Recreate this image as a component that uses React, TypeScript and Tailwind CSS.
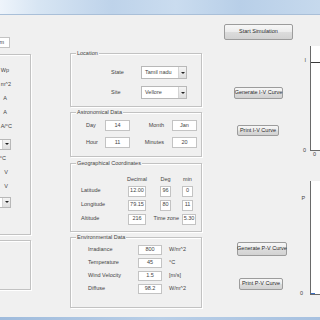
import React from "react";

const arrow = (
  <span className="flex h-full w-[8px] items-center justify-center border-l border-[#d4d4d4] bg-[linear-gradient(#f4f4f4,#dedede)]">
    <span className="h-0 w-0 border-x-[2px] border-t-[2px] border-x-transparent border-t-[#222]" />
  </span>
);

function Field({ v, className }: { v: string; className: string }) {
  return (
    <div className={"flex shrink-0 items-center justify-center border border-[#c3c3c3] bg-white " + className}>
      {v}
    </div>
  );
}

function Button({ label, className }: { label: string; className: string }) {
  return (
    <div
      className={
        "flex shrink-0 items-center justify-center self-start whitespace-nowrap rounded-[2px] border border-[#9c9c9c] bg-[linear-gradient(#f7f7f7,#ececec_48%,#dcdcdc_52%,#d2d2d2)] text-[#2a2a2a] " +
        className
      }
    >
      {label}
    </div>
  );
}

function Panel({ title, className, children }: { title?: string; className: string; children?: React.ReactNode }) {
  return (
    <div className={"relative shrink-0 border border-[#c2c2c2] shadow-[1px_1px_0_#ffffff,inset_1px_1px_0_#ffffff] " + className}>
      {title && (
        <span className="absolute -top-[4px] left-[5px] whitespace-nowrap bg-[#f0f0f0] px-[1px] leading-[7px]">{title}</span>
      )}
      {children}
    </div>
  );
}

function LeftColumn() {
  return (
    <div className="flex w-[31px] shrink-0 flex-col">
      <div className="mt-[22px] flex h-[11px] w-[14px] -ml-[4px] items-center justify-end border border-[#c3c3c3] bg-white pr-[5px]">m</div>
      <Panel className="mt-[6px] -ml-[2px] h-[181px] w-[33px]">
        <div className="flex flex-col pt-[9px]">
          <div className="flex h-[14px] w-[10px] items-center justify-end">Wp</div>
          <div className="flex h-[14px] w-[12px] items-center justify-end whitespace-nowrap">m^2</div>
          <div className="flex h-[14px] w-[8px] items-center justify-end">A</div>
          <div className="flex h-[14px] w-[8px] items-center justify-end">A</div>
          <div className="flex h-[14px] w-[13px] items-center justify-end whitespace-nowrap">A/°C</div>
          <div className="mt-[3px] flex h-[14px] w-[12px] items-center justify-end">
            <div className="flex h-[11px] w-[20px] shrink-0 items-center justify-end border border-[#b8b8b8] bg-white">{arrow}</div>
          </div>
          <div className="mt-[1px] flex h-[14px] w-[7px] items-center justify-end">°C</div>
          <div className="flex h-[14px] w-[9px] items-center justify-end">V</div>
          <div className="flex h-[14px] w-[9px] items-center justify-end">V</div>
          <div className="mt-[1px] flex h-[14px] w-[12px] items-center justify-end">
            <div className="flex h-[11px] w-[20px] shrink-0 items-center justify-end border border-[#b8b8b8] bg-white">{arrow}</div>
          </div>
        </div>
      </Panel>
      <Panel className="mt-[5px] -ml-[2px] h-[50px] w-[33px]" />
    </div>
  );
}

function Select({ value }: { value: string }) {
  return (
    <div className="flex h-[13px] w-[46px] items-center border border-[#b8b8b8] bg-white">
      <span className="flex-1 whitespace-nowrap pl-[3px]">{value}</span>
      {arrow}
    </div>
  );
}

function MiddleColumn() {
  return (
    <div className="ml-[39px] flex w-[132px] shrink-0 flex-col pt-[38px]">
      <Panel title="Location" className="h-[54px]">
        <div className="flex flex-col gap-[7px] pt-[12px]">
          <div className="flex h-[13px] items-center">
            <span className="ml-[40px] w-[30px]">State</span>
            <Select value="Tamil nadu" />
          </div>
          <div className="flex h-[13px] items-center">
            <span className="ml-[40px] w-[30px]">Site</span>
            <Select value="Vellore" />
          </div>
        </div>
      </Panel>

      <Panel title="Astronomical Data" className="mt-[5px] h-[45px]">
        <div className="flex flex-col gap-[6px] pt-[7px]">
          <div className="flex h-[11px] items-center">
            <span className="ml-[15px] w-[19px]">Day</span>
            <Field v="14" className="h-[11px] w-[25px]" />
            <span className="w-[42px] pr-[8px] text-right">Month</span>
            <Field v="Jan" className="h-[11px] w-[25px]" />
          </div>
          <div className="flex h-[11px] items-center">
            <span className="ml-[15px] w-[19px]">Hour</span>
            <Field v="11" className="h-[11px] w-[25px]" />
            <span className="w-[42px] pr-[8px] text-right">Minutes</span>
            <Field v="20" className="h-[11px] w-[25px]" />
          </div>
        </div>
      </Panel>

      <Panel title="Geographical Coordinates" className="mt-[6px] h-[69px]">
        <div className="flex flex-col pt-[12px]">
          <div className="flex h-[8px] items-center">
            <span className="ml-[10px] w-[47px]" />
            <span className="flex w-[18px] justify-center whitespace-nowrap">Decimal</span>
            <span className="w-[14px]" />
            <span className="flex w-[11px] justify-center">Deg</span>
            <span className="w-[11px]" />
            <span className="flex w-[11px] justify-center">min</span>
          </div>
          {[
            ["Latitude", "12.00", "96", "0"],
            ["Longitude", "79.15", "80", "11"],
          ].map(r => (
            <div key={r[0]} className="flex h-[14px] items-center">
              <span className="ml-[10px] w-[47px]">{r[0]}</span>
              <Field v={r[1]} className="h-[11px] w-[18px]" />
              <span className="w-[14px]" />
              <Field v={r[2]} className="h-[11px] w-[11px]" />
              <span className="w-[11px]" />
              <Field v={r[3]} className="h-[11px] w-[11px]" />
            </div>
          ))}
          <div className="flex h-[14px] items-center">
            <span className="ml-[10px] w-[47px]">Altitude</span>
            <Field v="216" className="h-[11px] w-[18px]" />
            <span className="w-[36px] whitespace-nowrap pr-[3px] text-right">Time zone</span>
            <Field v="5.30" className="h-[11px] w-[14px]" />
          </div>
        </div>
      </Panel>

      <Panel title="Environmental Data" className="mt-[5px] h-[71px]">
        <div className="flex flex-col pt-[5px]">
          {[
            ["Irradiance", "800", "W/m^2"],
            ["Temperature", "45", "°C"],
            ["Wind Velocity", "1.5", "[m/s]"],
            ["Diffuse", "98.2", "W/m^2"],
          ].map(r => (
            <div key={r[0]} className="flex h-[13px] items-center">
              <span className="ml-[17px] w-[50px]">{r[0]}</span>
              <Field v={r[1]} className="h-[10px] w-[24px]" />
              <span className="ml-[7px]">{r[2]}</span>
            </div>
          ))}
        </div>
      </Panel>
    </div>
  );
}

function ButtonColumn() {
  return (
    <div className="flex w-[98px] shrink-0 flex-col">
      <Button label="Start Simulation" className="ml-[22px] mt-[9px] h-[16px] w-[69px]" />
      <Button label="Generate I-V Curve" className="ml-[32px] mt-[47px] h-[12px] w-[49px]" />
      <Button label="Print I-V Curve" className="ml-[35px] mt-[26px] h-[11px] w-[42px]" />
      <Button label="Generate P-V Curve" className="ml-[35px] mt-[106px] h-[14px] w-[50px]" />
      <Button label="Print P-V Curve" className="ml-[37px] mt-[22px] h-[12px] w-[44px]" />
    </div>
  );
}

function PlotColumn() {
  return (
    <div className="flex w-[20px] shrink-0 flex-col">
      <div className="mt-[31px] flex">
        <div className="flex h-[105px] w-[13px] flex-col items-end pr-[4px]">
          <span className="mt-[12px]">I</span>
          <span className="mt-auto -mb-[2px]">0</span>
        </div>
        <div className="h-[105px] w-[10px] shrink-0 border-b border-l border-[#6a6a6a] bg-white">
          <div className="mt-[16px] h-[1px] bg-[#3a3a3a]" />
        </div>
      </div>
      <div className="ml-[13px] mt-[1px]">0</div>
      <div className="mt-[23px] flex">
        <div className="flex h-[114px] w-[16px] flex-col items-end pr-[5px]">
          <span className="mt-[15px]">P</span>
          <span className="mt-auto -mb-[2px] pr-[2px]">0</span>
        </div>
        <div className="flex h-[114px] w-[10px] shrink-0 flex-col border-b border-l border-[#6a6a6a] bg-white">
          <div className="mt-auto h-[1px] w-[4px] bg-[#3b6fc4]" />
        </div>
      </div>
    </div>
  );
}

export default function App() {
  return (
    <div className="h-[320px] w-[320px] overflow-hidden bg-[#f0f0f0] font-['Liberation_Sans',Arial,sans-serif] text-[5.5px] leading-none text-[#444444]">
      <div className="h-[15px] border-b border-[#a9bfd8] bg-[linear-gradient(90deg,#eef4fb_0%,#d7e5f3_12%,#bed3ea_35%,#cadcef_55%,#b8cfe8_75%,#c6d9ed_100%)]" />
      <div className="flex h-[302px]">
        <LeftColumn />
        <MiddleColumn />
        <ButtonColumn />
        <PlotColumn />
      </div>
      <div className="h-[3px] bg-[linear-gradient(90deg,#9fbbdc,#b9cfe7_50%,#a7c1e0)]" />
    </div>
  );
}
